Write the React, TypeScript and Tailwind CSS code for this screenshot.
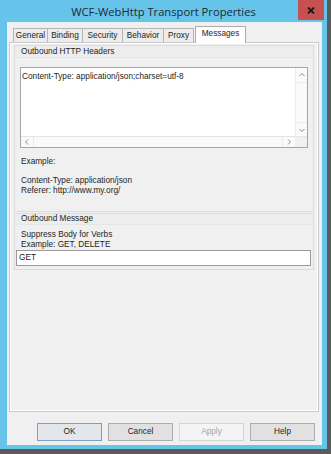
import React from "react";

const Chevron = ({ dir }: { dir: "up" | "down" | "left" | "right" }) => {
  const paths: Record<string, string> = {
    up: "M1.5 5 L4 2.5 L6.5 5",
    down: "M1.5 3 L4 5.5 L6.5 3",
    left: "M5 1.5 L2.5 4 L5 6.5",
    right: "M3 1.5 L5.5 4 L3 6.5",
  };
  return (
    <svg width="8" height="8" viewBox="0 0 8 8">
      <path d={paths[dir]} fill="none" stroke="#8c8c8c" strokeWidth="1" />
    </svg>
  );
};

const Tab = ({ label, w, selected }: { label: string; w: string; selected?: boolean }) =>
  selected ? (
    <div
      className={`${w} h-[17px] -mb-px ml-[1px] relative z-10 bg-white border border-b-0 border-[#acacac] flex items-start justify-center pt-[2px] leading-[10px]`}
    >
      {label}
    </div>
  ) : (
    <div
      className={`${w} h-[14px] -ml-px first:ml-0 bg-[#ececec] border border-b-0 border-[#b5b5b5] flex items-center justify-center leading-[10px]`}
    >
      {label}
    </div>
  );

export default function App() {
  return (
    <div className="w-[331px] h-[454px] bg-[#5b5b5b] font-['Liberation_Sans',Arial,sans-serif] text-[8.25px] text-[#1e1e1e]">
      <div className="w-[327px] h-[449px] bg-[#66c4ea] flex flex-col">
        {/* Title bar */}
        <div className="h-[22px] relative flex items-center justify-center">
          <span className="font-['Open_Sans',sans-serif] text-[11.2px] leading-[14px] text-[#1b2a33] mt-[1px]">
            WCF-WebHttp Transport Properties
          </span>
          <div className="absolute right-[3px] top-0 w-[26px] h-[20px] bg-[#c75050] flex items-center justify-center">
            <svg width="8" height="7" viewBox="0 0 8 7">
              <path d="M1 0.5 L7 6.5 M7 0.5 L1 6.5" stroke="#1a1a1a" strokeWidth="1.8" />
            </svg>
          </div>
        </div>

        {/* Client area */}
        <div className="flex-1 ml-[7px] mr-[5px] mb-[4px] bg-[#f0f0f0] flex flex-col">
          {/* Tabs */}
          <div className="h-[20px] pt-[4px] pl-[6px] flex items-end">
            <Tab label="General" w="w-[35px]" />
            <Tab label="Binding" w="w-[36px]" />
            <Tab label="Security" w="w-[41px]" />
            <Tab label="Behavior" w="w-[42px]" />
            <Tab label="Proxy" w="w-[31px]" />
            <Tab label="Messages" w="w-[51px]" selected />
          </div>

          {/* Tab panel */}
          <div className="h-[370px] ml-[2px] mr-[3px] border border-[#c9c9c9] bg-[#f0f0f0] shadow-[inset_1px_1px_0_#ffffff,inset_-1px_-1px_0_#ffffff] px-[4px] pt-[2px] flex flex-col">
            {/* Group 1 */}
            <div className="h-[167px] border border-[#dcdcdc] flex flex-col">
              <div className="h-[12px] flex items-center pl-[6px] bg-[#ededed] border-b border-[#e6e6e6] leading-[10px]">
                Outbound HTTP Headers
              </div>
              <div className="mx-[5px] mt-[9px] h-[81px] border border-[#a5a5a5] bg-white flex flex-col">
                <div className="flex-1 flex min-h-0">
                  <div className="flex-1 pl-[1px] pt-[4px] leading-[10px] whitespace-nowrap overflow-hidden">
                    Content-Type: application/json;charset=utf-8
                  </div>
                  <div className="w-[12px] flex flex-col justify-between bg-[#fafafa] border-l border-[#ececec]">
                    <div className="h-[15px] flex items-center justify-center border-b border-[#ececec]">
                      <Chevron dir="up" />
                    </div>
                    <div className="h-[14px] flex items-center justify-center border-t border-[#ececec]">
                      <Chevron dir="down" />
                    </div>
                  </div>
                </div>
                <div className="h-[11px] flex border-t border-[#e4e4e4]">
                  <div className="flex-1 flex justify-between items-center bg-[#fafafa]">
                    <div className="w-[13px] h-full flex items-center justify-center border-r border-[#ececec]">
                      <Chevron dir="left" />
                    </div>
                    <div className="w-[13px] h-full flex items-center justify-center border-l border-[#ececec]">
                      <Chevron dir="right" />
                    </div>
                  </div>
                  <div className="w-[12px] bg-[#f0f0f0]" />
                </div>
              </div>
              <div className="pl-[6px] mt-[9px] leading-[10px]">
                <div>Example:</div>
                <div className="h-[9px]" />
                <div>Content-Type: application/json</div>
                <div>Referer: http://www.my.org/</div>
              </div>
            </div>

            {/* Group 2 */}
            <div className="h-[57px] mt-[1px] border border-[#dcdcdc] flex flex-col">
              <div className="h-[11px] flex items-center pl-[6px] bg-[#ededed] border-b border-[#e6e6e6] leading-[10px]">
                Outbound Message
              </div>
              <div className="pl-[6px] mt-[5px] leading-[9.5px]">
                <div>Suppress Body for Verbs</div>
                <div>Example: GET, DELETE</div>
              </div>
              <div className="ml-[1px] mr-[2px] mt-[1px] h-[16px] border border-[#9a9a9a] bg-white flex items-center pl-[2px] leading-[10px]">
                GET
              </div>
            </div>
          </div>

          {/* Buttons */}
          <div className="mt-[11px] flex justify-end gap-[6px] pr-[7px]">
            <div className="w-[65px] h-[18px] border border-[#7f9fc2] bg-[#e3e6ea] flex items-center justify-center">OK</div>
            <div className="w-[65px] h-[18px] border border-[#adadad] bg-[#e1e1e1] flex items-center justify-center">Cancel</div>
            <div className="w-[65px] h-[18px] border border-[#d5d5d5] bg-[#f4f4f4] text-[#a3a3a3] flex items-center justify-center">Apply</div>
            <div className="w-[65px] h-[18px] border border-[#adadad] bg-[#e1e1e1] flex items-center justify-center">Help</div>
          </div>
        </div>
      </div>
    </div>
  );
}
